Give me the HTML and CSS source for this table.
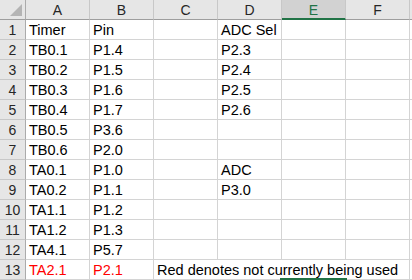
FILE: index.html
```html
<!DOCTYPE html>
<html>
<head>
<meta charset="utf-8">
<link rel="stylesheet" href="styles.css">
</head>
<body>
<div class="sheet">
  <div class="corner"><div class="tri"></div></div>
  <div class="ch">A</div><div class="ch">B</div><div class="ch">C</div><div class="ch">D</div><div class="ch sel">E</div><div class="ch">F</div><div class="ch"></div>

  <div class="rh">1</div><div class="c">Timer</div><div class="c">Pin</div><div class="c"></div><div class="c">ADC Sel</div><div class="c"></div><div class="c"></div><div class="c"></div>
  <div class="rh">2</div><div class="c">TB0.1</div><div class="c">P1.4</div><div class="c"></div><div class="c">P2.3</div><div class="c"></div><div class="c"></div><div class="c"></div>
  <div class="rh">3</div><div class="c">TB0.2</div><div class="c">P1.5</div><div class="c"></div><div class="c">P2.4</div><div class="c"></div><div class="c"></div><div class="c"></div>
  <div class="rh">4</div><div class="c">TB0.3</div><div class="c">P1.6</div><div class="c"></div><div class="c">P2.5</div><div class="c"></div><div class="c"></div><div class="c"></div>
  <div class="rh">5</div><div class="c">TB0.4</div><div class="c">P1.7</div><div class="c"></div><div class="c">P2.6</div><div class="c"></div><div class="c"></div><div class="c"></div>
  <div class="rh">6</div><div class="c">TB0.5</div><div class="c">P3.6</div><div class="c"></div><div class="c"></div><div class="c"></div><div class="c"></div><div class="c"></div>
  <div class="rh">7</div><div class="c">TB0.6</div><div class="c">P2.0</div><div class="c"></div><div class="c"></div><div class="c"></div><div class="c"></div><div class="c"></div>
  <div class="rh">8</div><div class="c">TA0.1</div><div class="c">P1.0</div><div class="c"></div><div class="c">ADC</div><div class="c"></div><div class="c"></div><div class="c"></div>
  <div class="rh">9</div><div class="c">TA0.2</div><div class="c">P1.1</div><div class="c"></div><div class="c">P3.0</div><div class="c"></div><div class="c"></div><div class="c"></div>
  <div class="rh">10</div><div class="c">TA1.1</div><div class="c">P1.2</div><div class="c"></div><div class="c"></div><div class="c"></div><div class="c"></div><div class="c"></div>
  <div class="rh">11</div><div class="c">TA1.2</div><div class="c">P1.3</div><div class="c"></div><div class="c"></div><div class="c"></div><div class="c"></div><div class="c"></div>
  <div class="rh">12</div><div class="c">TA4.1</div><div class="c">P5.7</div><div class="c"></div><div class="c"></div><div class="c"></div><div class="c"></div><div class="c"></div>
  <div class="rh">13</div><div class="c red">TA2.1</div><div class="c red">P2.1</div><div class="c span4">Red denotes not currently being used</div><div class="c"></div>
</div>
<div class="active"></div>
</body>
</html>
```
FILE: styles.css
```css
html, body {
  margin: 0;
  padding: 0;
  background: #ffffff;
  overflow: hidden;
}
.sheet {
  display: grid;
  width: 412px;
  overflow: hidden;
  grid-template-columns: 26px repeat(6, 64px) 1fr;
  grid-auto-rows: 20px;
  font-family: "Liberation Sans", Arial, sans-serif;
  font-size: 14.5px;
  color: #000;
}
.corner, .ch, .rh, .c {
  box-sizing: border-box;
  border-right: 1px solid #d4d4d4;
  border-bottom: 1px solid #d4d4d4;
}
.corner {
  background: #e6e6e6;
  border-right: 1px solid #ababab;
  border-bottom: 1px solid #9e9e9e;
  position: relative;
}
.tri {
  position: absolute;
  right: 3px;
  bottom: 3px;
  width: 0;
  height: 0;
  border-left: 12px solid transparent;
  border-bottom: 12px solid #b4b4b4;
}
.ch {
  background: #e6e6e6;
  border-right: 1px solid #c8c8c8;
  border-bottom: 1px solid #9e9e9e;
  color: #262626;
  text-align: center;
  line-height: 20px;
  font-size: 14px;
}
.ch.sel {
  background: #d2d2d2;
  color: #217346;
  border-bottom: 2px solid #217346;
}
.rh {
  background: #e6e6e6;
  border-right: 1px solid #ababab;
  border-bottom: 1px solid #c8c8c8;
  color: #262626;
  text-align: center;
  line-height: 21px;
  font-size: 14px;
}
.c {
  padding-left: 3px;
  line-height: 21px;
  white-space: nowrap;
  overflow: visible;
}
.red {
  color: #ff0000;
}
.span4 {
  grid-column: span 4;
}
.active {
  position: absolute;
  left: 280px;
  top: 278px;
  width: 67px;
  height: 2px;
  background: #217346;
}
```
